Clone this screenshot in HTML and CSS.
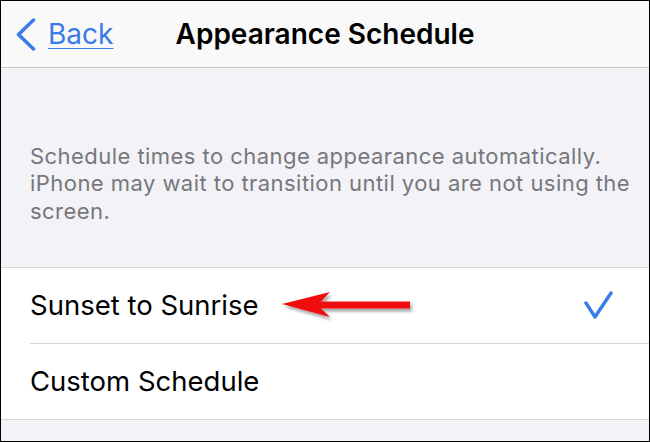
FILE: index.html
```html
<!DOCTYPE html>
<html lang="en">
<head>
    <meta charset="UTF-8">
    <meta name="viewport" content="width=device-width, initial-scale=1.0">
    <title>Appearance Schedule</title>
    <link rel="stylesheet" href="styles.css">
</head>
<body>
    <div class="screen">
        <div class="nav">
            <a class="back" href="#">
                <svg class="chevron" width="20" height="33" viewBox="0 0 20 33">
                    <polyline points="17.5,2 2.5,16.5 17.5,31" fill="none" stroke="#3a7bea" stroke-width="3.5" stroke-linecap="round" stroke-linejoin="round"/>
                </svg>
                <span class="back-label">Back</span>
            </a>
            <h1 class="title">Appearance Schedule</h1>
            <div></div>
        </div>

        <p class="note">Schedule times to change appearance automatically. iPhone may wait to transition until you are not using the screen.</p>

        <div class="list">
            <div class="row">
                <span>Sunset to Sunrise</span>
                <svg class="check" width="30" height="28" viewBox="0 0 30 28">
                    <polyline points="3,12 12,26 28,2" fill="none" stroke="#3a7bea" stroke-width="3.4" stroke-linecap="round" stroke-linejoin="round"/>
                </svg>
                <!-- annotation arrow drawn over the row -->
                <svg class="pointer" width="140" height="40" viewBox="0 0 140 40">
                    <defs>
                        <filter id="shade" x="-10%" y="-30%" width="130%" height="170%">
                            <feDropShadow dx="2" dy="3" stdDeviation="1.6" flood-color="#000" flood-opacity="0.35"/>
                        </filter>
                    </defs>
                    <g filter="url(#shade)">
                        <polygon points="3,17 51,5 42,14.5 131,14.5 131,21.5 42,21.5 51,30" fill="#f01010"/>
                    </g>
                </svg>
            </div>
            <div class="row">
                <span>Custom Schedule</span>
            </div>
        </div>
    </div>
</body>
</html>
```

FILE: styles.css
```css
body {
    margin: 0;
    padding: 0;
    font-family: Inter, "Noto Sans", sans-serif;
    background-color: #000;
}
.screen {
    width: 650px;
    height: 442px;
    box-sizing: border-box;
    border: 1px solid #000;
    background-color: #f2f2f7;
    overflow: hidden;
}
.nav {
    height: 66px;
    display: grid;
    grid-template-columns: 1fr auto 1fr;
    align-items: center;
    background-color: #f9f9f9;
    border-bottom: 1px solid #c8c8cb;
}
.back {
    display: flex;
    align-items: center;
    gap: 12px;
    padding-left: 15px;
    color: #3a7bea;
    font-size: 28px;
    text-decoration: none;
}
.back-label {
    text-decoration: underline;
    text-decoration-thickness: 1px;
    text-underline-offset: 4px;
}
.title {
    margin: 0;
    font-size: 28px;
    font-weight: 600;
    color: #000;
}
.note {
    margin: 0;
    padding: 75px 6px 42px 29px;
    font-size: 22px;
    line-height: 27.3px;
    letter-spacing: 0.45px;
    color: #77777c;
}
.list {
    background-color: #fff;
    border-top: 1px solid #d6d6d9;
    border-bottom: 1px solid #d6d6d9;
    padding-left: 29px;
}
.row {
    position: relative;
    height: 75px;
    display: flex;
    align-items: center;
    justify-content: space-between;
    padding-right: 36px;
    font-size: 27.5px;
    color: #000;
}
.row + .row {
    border-top: 1px solid #d6d6d9;
}
.pointer {
    position: absolute;
    left: 249px;
    top: 19px;
}
```
